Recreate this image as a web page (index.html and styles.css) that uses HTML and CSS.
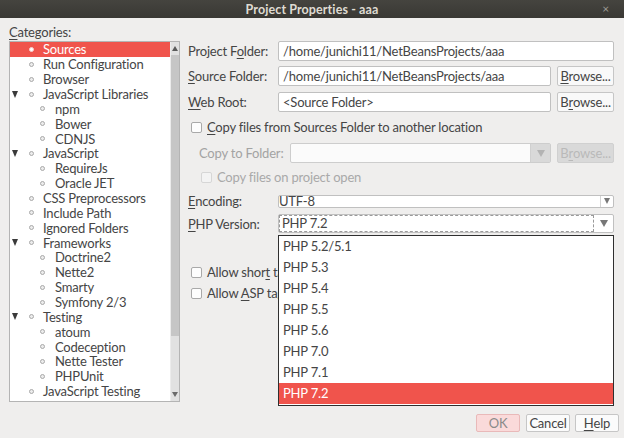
FILE: index.html
```html
<!DOCTYPE html>
<html>
<head>
<meta charset="utf-8">
<title>Project Properties - aaa</title>
<link rel="stylesheet" href="styles.css">
</head>
<body>
<div class="window">
  <div class="titlebar">
    <span></span>
    <span class="title">Project Properties - aaa</span>
    <span class="close">×</span>
  </div>
  <div class="main">
    <div class="left">
      <div class="cat-label"><u>C</u>ategories:</div>
      <div class="tree">
        <ul class="tree-list">
          <li class="row l1 sel"><span class="tw"></span><span class="dot"></span><span class="txt">Sources</span></li>
          <li class="row l1"><span class="tw"></span><span class="dot"></span><span class="txt">Run Configuration</span></li>
          <li class="row l1"><span class="tw"></span><span class="dot"></span><span class="txt">Browser</span></li>
          <li class="row l1"><span class="tw"><i class="tri"></i></span><span class="dot"></span><span class="txt">JavaScript Libraries</span></li>
          <li class="row l2"><span class="dot"></span><span class="txt">npm</span></li>
          <li class="row l2"><span class="dot"></span><span class="txt">Bower</span></li>
          <li class="row l2"><span class="dot"></span><span class="txt">CDNJS</span></li>
          <li class="row l1"><span class="tw"><i class="tri"></i></span><span class="dot"></span><span class="txt">JavaScript</span></li>
          <li class="row l2"><span class="dot"></span><span class="txt">RequireJs</span></li>
          <li class="row l2"><span class="dot"></span><span class="txt">Oracle JET</span></li>
          <li class="row l1"><span class="tw"></span><span class="dot"></span><span class="txt">CSS Preprocessors</span></li>
          <li class="row l1"><span class="tw"></span><span class="dot"></span><span class="txt">Include Path</span></li>
          <li class="row l1"><span class="tw"></span><span class="dot"></span><span class="txt">Ignored Folders</span></li>
          <li class="row l1"><span class="tw"><i class="tri"></i></span><span class="dot"></span><span class="txt">Frameworks</span></li>
          <li class="row l2"><span class="dot"></span><span class="txt">Doctrine2</span></li>
          <li class="row l2"><span class="dot"></span><span class="txt">Nette2</span></li>
          <li class="row l2"><span class="dot"></span><span class="txt">Smarty</span></li>
          <li class="row l2"><span class="dot"></span><span class="txt">Symfony 2/3</span></li>
          <li class="row l1"><span class="tw"><i class="tri"></i></span><span class="dot"></span><span class="txt">Testing</span></li>
          <li class="row l2"><span class="dot"></span><span class="txt">atoum</span></li>
          <li class="row l2"><span class="dot"></span><span class="txt">Codeception</span></li>
          <li class="row l2"><span class="dot"></span><span class="txt">Nette Tester</span></li>
          <li class="row l2"><span class="dot"></span><span class="txt">PHPUnit</span></li>
          <li class="row l1"><span class="tw"></span><span class="dot"></span><span class="txt">JavaScript Testing</span></li>
        </ul>
        <div class="vscroll">
          <span class="sarrow up"></span>
          <div class="thumb"></div>
          <div class="track"></div>
          <span class="sarrow down"></span>
        </div>
      </div>
    </div>

    <div class="right">
      <div class="field f1">
        <span class="lbl">Project F<u>o</u>lder:</span>
        <div class="input">/home/junichi11/NetBeansProjects/aaa</div>
      </div>
      <div class="field f2">
        <span class="lbl"><u>S</u>ource Folder:</span>
        <div class="input">/home/junichi11/NetBeansProjects/aaa</div>
        <div class="btn browse"><u>B</u>rowse...</div>
      </div>
      <div class="field f3">
        <span class="lbl"><u>W</u>eb Root:</span>
        <div class="input">&lt;Source Folder&gt;</div>
        <div class="btn browse">B<u>r</u>owse...</div>
      </div>
      <div class="check f4">
        <span class="box"></span>
        <span class="ctext"><u>C</u>opy files from Sources Folder to another location</span>
      </div>
      <div class="field f5">
        <span class="lbl lbl-ind dis">Copy to Folder:</span>
        <div class="combo disabled"><span class="cval"></span><span class="cbtn"><i class="carr"></i></span></div>
        <div class="btn browse dis-btn">B<u>r</u>owse...</div>
      </div>
      <div class="check f6 disabled">
        <span class="box"></span>
        <span class="ctext">Copy files on project open</span>
      </div>
      <div class="field f7">
        <span class="lbl"><u>E</u>ncoding:</span>
        <div class="combo enc"><span class="cval">UTF-8</span><span class="cbtn"><i class="carr"></i></span></div>
      </div>
      <div class="field f8">
        <span class="lbl"><u>P</u>HP Version:</span>
        <div class="combo php"><span class="cval focus">PHP 7.2</span><span class="cbtn plain"><i class="carr"></i></span></div>
      </div>
      <div class="check f9">
        <span class="box"></span>
        <span class="ctext">Allow shor<u>t</u> tags</span>
      </div>
      <div class="check f10">
        <span class="box"></span>
        <span class="ctext">Allow <u>A</u>SP tags</span>
      </div>
    </div>
  </div>

  <div class="footer">
    <div class="btn fbtn ok">OK</div>
    <div class="btn fbtn">Cancel</div>
    <div class="btn fbtn"><u>H</u>elp</div>
  </div>

  <ul class="popup">
    <li>PHP 5.2/5.1</li>
    <li>PHP 5.3</li>
    <li>PHP 5.4</li>
    <li>PHP 5.5</li>
    <li>PHP 5.6</li>
    <li>PHP 7.0</li>
    <li>PHP 7.1</li>
    <li class="psel">PHP 7.2</li>
  </ul>
</div>
</body>
</html>
```

FILE: styles.css
```css
* { box-sizing: border-box; }
html, body { margin: 0; padding: 0; }
body {
  width: 624px;
  height: 438px;
  overflow: hidden;
  background: #efeeed;
  font-family: Lato, "Open Sans", sans-serif;
  font-size: 13px;
  letter-spacing: -0.2px;
  color: #454545;
}
u { text-decoration: underline; text-decoration-thickness: 1px; text-underline-offset: 2px; }

.window { position: relative; width: 624px; height: 438px; display: flex; flex-direction: column; }

/* title bar */
.titlebar {
  height: 18px;
  flex: none;
  background: linear-gradient(#45443f, #393834);
  display: grid;
  grid-template-columns: 1fr auto 1fr;
  align-items: center;
}
.title { color: #dfdbd2; font-weight: bold; font-size: 12.5px; letter-spacing: 0.1px; }
.close { justify-self: end; margin-right: 15px; color: #9c9a94; font-size: 12px; line-height: 1; }

/* main */
.main { display: flex; gap: 8px; padding: 6px 10px 0 9px; height: 384px; flex: none; }
.left { width: 171px; flex: none; display: flex; flex-direction: column; }
.cat-label { height: 17px; line-height: 17px; }

.tree {
  height: 361px;
  border: 1px solid #b4b4b4;
  background: #fff;
  display: flex;
  overflow: hidden;
}
.tree-list { list-style: none; margin: 0; padding: 0; flex: 1; overflow: hidden; }
.row { height: 14.87px; display: flex; align-items: center; white-space: nowrap; line-height: 14px; }
.row.sel { background: #f0544c; color: #fff; }
.row .tw { width: 19px; flex: none; display: flex; align-items: center; padding-left: 2px; }
.row.l2 { padding-left: 30px; }
.tri { display: block; width: 0; height: 0; border-left: 3.5px solid transparent; border-right: 3.5px solid transparent; border-top: 7px solid #3a3a3a; }
.dot { width: 5px; height: 5px; border-radius: 50%; border: 1px solid #a9a9a9; background: #ececec; flex: none; }
.row.sel .dot { border-color: #f7d3d1; background: #fff; }
.row.l1 .txt { margin-left: 9px; }
.row.l2 .txt { margin-left: 10px; }

.vscroll { width: 9px; flex: none; background: #e1e1e1; display: flex; flex-direction: column; align-items: center; border-left: 1px solid #ececec; }
.sarrow { width: 0; height: 0; border-left: 3px solid transparent; border-right: 3px solid transparent; flex: none; }
.sarrow.up { border-bottom: 5px solid #5a5a5a; margin-top: 4px; }
.sarrow.down { border-top: 5px solid #6a6a6a; margin-bottom: 4px; }
.thumb { width: 9px; height: 281px; background: #c6c6c6; margin-top: 4px; flex: none; }
.track { flex: 1; }

/* right */
.right { flex: 1; display: flex; flex-direction: column; }
.field { display: flex; align-items: center; height: 20px; flex: none; }
.lbl { width: 90px; flex: none; white-space: nowrap; }
.lbl-ind { width: 102px; padding-left: 11px; }
.dis { color: #a3a3a3; }
.input {
  flex: 1;
  height: 20px;
  background: #fff;
  border: 1px solid #c0c0c0;
  border-radius: 2px;
  padding-left: 4px;
  line-height: 18px;
  white-space: nowrap;
}
.btn {
  background: #f9f9f9;
  border: 1px solid #c6c6c6;
  border-radius: 2px;
  display: flex;
  align-items: center;
  justify-content: center;
  white-space: nowrap;
}
.browse { width: 57px; height: 20px; margin-left: 6px; flex: none; }
.dis-btn { background: #d9d9d9; border-color: #d0d0d0; color: #b9b9b9; }

.f1 { margin-top: 17px; }
.f2 { margin-top: 5px; }
.f3 { margin-top: 6px; }
.f4 { margin-top: 5px; }
.f5 { margin-top: 6px; }
.f6 { margin-top: 4px; }
.f7 { margin-top: 4px; }
.f8 { margin-top: 3px; }
.f9 { margin-top: 28px; }
.f10 { margin-top: 1px; }

.check { display: flex; align-items: center; height: 20px; flex: none; padding-left: 3px; white-space: nowrap; }
.check .box { width: 11px; height: 11px; border: 1px solid #a9a9a9; border-radius: 2px; background: #fdfdfd; flex: none; }
.check .ctext { margin-left: 5px; }
.check.disabled { padding-left: 13px; color: #a9a9a9; }
.check.disabled .box { border-color: #d6d6d6; background: #f3f3f3; }

.combo {
  flex: 1;
  display: flex;
  background: #fff;
  border: 1px solid #c0c0c0;
  border-radius: 2px;
  height: 20px;
}
.combo .cval { flex: 1; padding-left: 4px; line-height: 18px; white-space: nowrap; }
.combo .cbtn { width: 20px; flex: none; display: flex; align-items: center; justify-content: center; border-left: 1px solid #d4d4d4; }
.carr { display: block; width: 0; height: 0; border-left: 4px solid transparent; border-right: 4px solid transparent; border-top: 7px solid #777; }
.combo.disabled { background: #fbfbfb; border-color: #cdcdcd; }
.combo.disabled .cbtn { background: #d9d9d9; border-left-color: #d0d0d0; }
.combo.disabled .carr { border-top-color: #b3b3b3; }
.combo.enc { height: 13px; align-self: center; }
.combo.enc .cval { line-height: 11px; padding-left: 0; }
.combo.enc .cbtn { width: 13px; }
.combo.enc .carr { border-left-width: 3.5px; border-right-width: 3.5px; border-top-width: 6px; }
.combo.php { height: 19px; align-self: flex-start; }
.combo.php .cval.focus { margin: 0; border: 1px dashed #9a9a9a; line-height: 15px; padding-left: 2px; }
.combo.php .cbtn.plain { border-left: none; width: 19px; }

/* footer */
.footer { display: flex; justify-content: flex-end; gap: 5px; padding-right: 5px; margin-top: 12px; }
.fbtn { height: 18px; width: 44px; background: #fbfbfb; }
.fbtn.ok { background: #fadada; border-color: #e9b9b9; color: #8a8a8a; margin-right: 1px; }

/* popup list */
.popup {
  position: absolute;
  left: 278px;
  top: 235px;
  width: 336px;
  height: 171px;
  margin: 0;
  padding: 0;
  list-style: none;
  background: #fff;
  border: 1px solid #2f2f2f;
}
.popup li { height: 21px; line-height: 21px; padding-left: 4px; }
.popup li.psel { background: #f0544c; color: #fff; }
```
